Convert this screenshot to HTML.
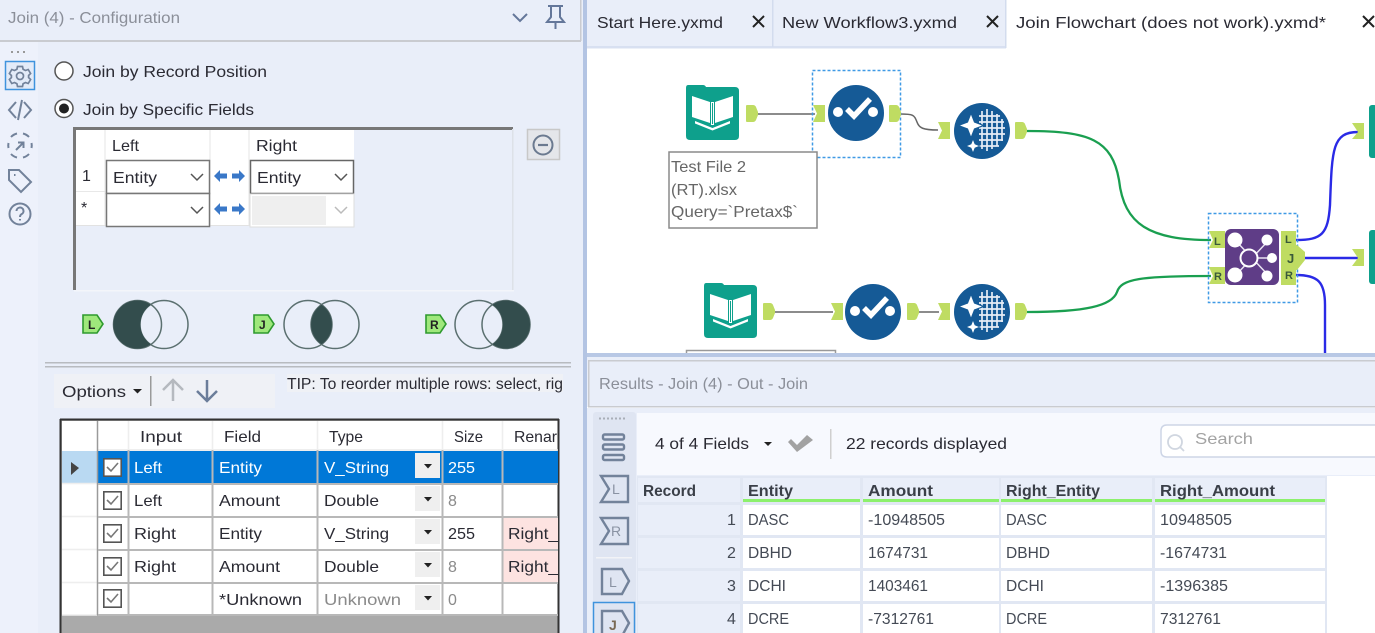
<!DOCTYPE html>
<html><head><meta charset="utf-8"><style>
html,body{margin:0;padding:0;background:#fff;overflow:hidden}
svg{display:block;position:absolute;left:0;top:0}
text{font-family:"Liberation Sans",sans-serif;font-size:16px;fill:#2a2a33}
.ttl{fill:#8b8f99}
.res{fill:#444a55}
.hdr{font-weight:bold;fill:#3a3f48}
.ic{fill:none;stroke:#72829a;stroke-width:2}
.gl{stroke:#b8b8b8;stroke-width:2}
</style></head><body>
<svg width="1375" height="633" viewBox="0 0 1375 633" xmlns="http://www.w3.org/2000/svg">
<defs>
<g id="book"><path d="M3 0h15q2 0 3 2h29q4 0 4 4v45q0 4-4 4H5q-4 0-4-4V3q0-3 2-3z" fill="#0ea08c"/>
<path d="M7 11l18 6v21L7 32zM48 11L30 17v21l18-6z" fill="#fff"/><path d="M26 17h3v23h-3z" fill="#fff"/><path d="M27.500 18v21" stroke="#0ea08c" stroke-width="1"/><path d="M10 36l17.500 7L45 36v2.500l-17.500 7L10 38.500z" fill="#fff"/></g>
<g id="check"><circle r="28" fill="#155a96"/><circle cx="-18" cy="-1" r="5" fill="#fff"/><circle cx="17" cy="-1" r="5" fill="#fff"/><path d="M-9-4l7 7L14-14" fill="none" stroke="#fff" stroke-width="5.500"/></g>
<g id="star"><circle r="28" fill="#155a96"/>
<path d="M0-20v38M5-22v42M10-20v38M15-17v32M20-12v22M-3-15H18M-3-9H22M-3-3H23M-3 3H23M-3 9H21M-3 15H17" stroke="#e6edf6" stroke-width="1.700"/>
<path d="M-11-18l3.500 9 9 3.500-9 3.500-3.500 9-3.500-9-9-3.500 9-3.500z" fill="#fff" stroke="#155a96" stroke-width="1.200"/><path d="M-9 8l2 5 5 2-5 2-2 5-2-5-5-2 5-2z" fill="#fff" stroke="#155a96" stroke-width=".8"/></g>
<polygon id="pIn" points="0,0 12,0 12,17 0,17 4,8.500" fill="#bfdc62"/>
<path id="pOut" d="M1 0h6q2 0 3 2l2 5v3l-2 5q-1 2-3 2H1q-1 0-1-1V1q0-1 1-1z" fill="#bfdc62"/>
<g id="ar"><path d="M0 6l6-6v3.500h7v5H6V12z" fill="#3a78c8"/><path d="M31 6l-6-6v3.500h-7v5h7V12z" fill="#3a78c8"/></g>
<g id="cb"><rect x=".8" y=".8" width="17.400" height="17.400" fill="#fff" stroke="#555" stroke-width="1.600"/><path d="M4 9l4 4 7-8" fill="none" stroke="#777" stroke-width="1.600"/></g>
<g id="dd"><rect width="25" height="25" fill="#efefef"/><path d="M9 11h8l-4 4.500z" fill="#222"/></g>
</defs>

<!-- left panel -->
<rect width="587" height="633" fill="#e9eef9"/>
<rect x="0" y="42" width="38" height="591" fill="#edf1fb"/>
<rect x="0" y="40" width="581" height="2" fill="#c9cbd0"/>
<rect x="580" y="0" width="1.500" height="41" fill="#c9cbd0"/>
<rect x="583" y="0" width="4" height="633" fill="#b3c4e3"/>
<text x="8" y="23" class="ttl" textLength="172" lengthAdjust="spacingAndGlyphs">Join (4) - Configuration</text>
<path d="M513 14l7 7 7-7" fill="none" stroke="#64779a" stroke-width="2"/>
<path d="M548 6h15M551 6v11l-4 5h17l-4-5V6M555.500 22v7" fill="none" stroke="#64779a" stroke-width="2"/>

<!-- side icons -->
<g fill="#999"><rect x="11" y="51" width="2" height="2"/><rect x="17" y="51" width="2" height="2"/><rect x="23" y="51" width="2" height="2"/></g>
<rect x="5.500" y="61.500" width="29" height="28" fill="#e3ebf8" stroke="#3f93dd" stroke-width="1.500"/>
<circle cx="20" cy="76" r="3.500" class="ic" style="stroke-width:1.700"/>
<path class="ic" style="stroke-width:1.700" d="M17.500 66.500h5l.6 2.800 2.400 1.200 2.700-1 2.400 4-2 2 0 2 2 2-2.400 4-2.700-1-2.400 1.200-.6 2.800h-5l-.6-2.800-2.400-1.200-2.700 1-2.400-4 2-2 0-2-2-2 2.400-4 2.700 1 2.400-1.200z"/>
<path class="ic" d="M16 102l-7 8 7 8M24 102l7 8-7 8M22 100l-4 20"/>
<path class="ic" d="M11 137a12 12 0 0 1 6-3.500M23 133.500a12 12 0 0 1 6 3.500M31.500 143a12 12 0 0 1 0 5M29 154a12 12 0 0 1-6 3.500M17 157.500a12 12 0 0 1-6-3.500M8.500 148a12 12 0 0 1 0-5M16 150l7-7M18 142.500h5.500v5.500"/>
<path class="ic" d="M9 170h10l12 12-10 10L9 180zM14 175h1.500"/>
<circle cx="20" cy="214" r="10.500" class="ic"/><path class="ic" d="M16.500 211a3.500 3.500 0 1 1 5 3.200c-1 .6-1.500 1.300-1.500 2.800M20 219v1.500"/>

<!-- radios -->
<circle cx="64" cy="71" r="9" fill="#fff" stroke="#555" stroke-width="1.500"/>
<circle cx="64" cy="108.500" r="9" fill="#fff" stroke="#555" stroke-width="1.500"/><circle cx="64" cy="108.500" r="5" fill="#222"/>
<text x="83" y="77" textLength="184" lengthAdjust="spacingAndGlyphs">Join by Record Position</text>
<text x="83" y="115" textLength="171" lengthAdjust="spacingAndGlyphs">Join by Specific Fields</text>

<!-- join field grid -->
<rect x="74" y="129" width="439" height="162" fill="#e9eef9"/>
<rect x="73" y="127" width="440" height="3" fill="#777"/>
<rect x="73" y="127" width="3" height="163" fill="#777"/>
<rect x="512" y="129" width="1.500" height="162" fill="#dde1e8"/>
<rect x="74" y="290" width="440" height="1.500" fill="#f3f5fa"/>
<rect x="76" y="130" width="278" height="96" fill="#fff"/>
<rect x="76" y="191" width="30" height="1" fill="#e8e8e8"/><rect x="76" y="225" width="278" height="1" fill="#e2e2e2"/>
<path d="M105 130v96M210 130v96M249 130v96" stroke="#e4e4e4" stroke-width="1"/>
<text x="112" y="151" textLength="27" lengthAdjust="spacingAndGlyphs">Left</text>
<text x="256" y="151" textLength="41" lengthAdjust="spacingAndGlyphs">Right</text>
<text x="82" y="181">1</text><text x="81" y="213">*</text>
<rect x="106.500" y="160.500" width="103" height="33" fill="#fff" stroke="#777" stroke-width="1.500"/>
<rect x="106.500" y="193.500" width="103" height="33" fill="#fff" stroke="#777" stroke-width="1.500"/>
<rect x="250.500" y="160.500" width="103" height="33" fill="#fff" stroke="#666" stroke-width="1.500"/>
<rect x="250" y="194" width="104" height="33" fill="#fff" stroke="#ddd"/><rect x="252" y="196" width="74" height="29" fill="#efefef"/>
<text x="113" y="183" textLength="44" lengthAdjust="spacingAndGlyphs">Entity</text>
<text x="257" y="183" textLength="44" lengthAdjust="spacingAndGlyphs">Entity</text>
<path d="M191 174l6 6 6-6M191 207l6 6 6-6M335 174l6 6 6-6" fill="none" stroke="#555" stroke-width="1.500"/>
<path d="M335 207l6 6 6-6" fill="none" stroke="#bbb" stroke-width="1.500"/>
<use href="#ar" x="214" y="170"/><use href="#ar" x="214" y="203"/>
<rect x="527.500" y="129.500" width="32" height="30" fill="#e4e6ea" stroke="#c8c8c8" stroke-width="1.500"/>
<circle cx="543" cy="145" r="9.500" fill="none" stroke="#6b7a90" stroke-width="2"/><path d="M538 145h10" stroke="#6b7a90" stroke-width="2.200"/>

<!-- venn -->
<g transform="translate(83,315)"><path d="M0 0h14l6 9-6 9H0z" fill="#9fe87c" stroke="#2f9a2f" stroke-width="1.600"/><text x="5" y="14" style="font-size:12px;font-weight:bold;fill:#222">L</text></g>
<g transform="translate(254,315)"><path d="M0 0h14l6 9-6 9H0z" fill="#9fe87c" stroke="#2f9a2f" stroke-width="1.600"/><text x="5" y="14" style="font-size:12px;font-weight:bold;fill:#222">J</text></g>
<g transform="translate(426,315)"><path d="M0 0h14l6 9-6 9H0z" fill="#9fe87c" stroke="#2f9a2f" stroke-width="1.600"/><text x="4" y="14" style="font-size:12px;font-weight:bold;fill:#222">R</text></g>
<g fill="none" stroke="#5b7070" stroke-width="1.500">
<circle cx="137.500" cy="324.500" r="24"/><circle cx="164" cy="324.500" r="24"/>
<circle cx="308" cy="324.500" r="24"/><circle cx="335" cy="324.500" r="24"/>
<circle cx="479" cy="324.500" r="24"/><circle cx="506" cy="324.500" r="24"/></g>
<path d="M150.800 304.700A24 24 0 1 0 150.800 344.300A24 24 0 0 1 150.800 304.700z" fill="#334d4d"/>
<path d="M321.500 304.700A24 24 0 0 1 321.500 344.300A24 24 0 0 1 321.500 304.700z" fill="#334d4d"/>
<path d="M492.500 304.700A24 24 0 1 1 492.500 344.300A24 24 0 0 0 492.500 304.700z" fill="#334d4d"/>

<!-- divider -->
<rect x="45" y="362" width="526" height="1.500" fill="#b8bbc0"/><rect x="45" y="366" width="526" height="1.500" fill="#b8bbc0"/>
<rect x="54" y="374" width="221" height="34" fill="#eff1f6"/>
<rect x="287" y="374" width="276" height="18" fill="#eff1f6"/>
<text x="62" y="397" textLength="64" lengthAdjust="spacingAndGlyphs">Options</text>
<path d="M133 389h9l-4.500 4.500z" fill="#222"/>
<rect x="150" y="376" width="1.500" height="30" fill="#9a9a9a"/>
<path d="M173 380v21M163 390l10-10 10 10" fill="none" stroke="#b5b9bf" stroke-width="2.500"/>
<path d="M207 380v21M197 391l10 10 10-10" fill="none" stroke="#6b7d9a" stroke-width="2.500"/>
<text x="287" y="389" textLength="276" lengthAdjust="spacingAndGlyphs">TIP: To reorder multiple rows: select, rig</text>

<!-- field table -->
<rect x="60" y="419" width="499" height="214" fill="#aaaaaa"/>
<rect x="62" y="421" width="496" height="194" fill="#fff"/>
<rect x="60" y="418.500" width="499" height="2" fill="#333"/>
<rect x="59.500" y="419" width="2" height="214" fill="#333"/><rect x="557.500" y="419" width="2" height="214" fill="#333"/>
<rect x="62" y="451" width="35" height="32" fill="#b9d9f2"/>
<rect x="98" y="451" width="460" height="32" fill="#0078d7"/>
<rect x="503" y="517" width="55" height="65" fill="#fde3e1"/>
<path d="M62 483.500h35M62 516.500h35M62 549.500h35M62 582.500h35M62 615h35" stroke="#eeeeee" stroke-width="1.500"/>
<path d="M98 450H558" stroke="#e8e8e8" stroke-width="1.500"/>
<path d="M97.500 421V615" stroke="#9a9a9a" stroke-width="1.500"/>
<path d="M128.500 450V615M212.500 450V615M317.500 450V615M442.500 450V615M502.500 450V615" class="gl"/>
<path d="M128.500 421V450M212.500 421V450M317.500 421V450M442.500 421V450M502.500 421V450" stroke="#eeeeee" stroke-width="1.500"/>
<path d="M98 484H558M98 517H558M98 550H558M98 583H558M98 615H558" class="gl"/>
<path d="M71 462l8 6-8 7z" fill="#444"/>
<use href="#cb" x="103" y="458"/><use href="#cb" x="103" y="491"/><use href="#cb" x="103" y="524"/><use href="#cb" x="103" y="557"/><use href="#cb" x="103" y="589"/>
<text x="140" y="442" textLength="42" lengthAdjust="spacingAndGlyphs">Input</text>
<text x="224" y="442" textLength="37" lengthAdjust="spacingAndGlyphs">Field</text>
<text x="329" y="442" textLength="34" lengthAdjust="spacingAndGlyphs">Type</text>
<text x="454" y="442" textLength="29" lengthAdjust="spacingAndGlyphs">Size</text>
<text x="514" y="442" textLength="43" lengthAdjust="spacingAndGlyphs">Renar</text>
<g>
<text x="134" y="473" style="fill:#fff" textLength="28" lengthAdjust="spacingAndGlyphs">Left</text>
<text x="219" y="473" style="fill:#fff" textLength="43" lengthAdjust="spacingAndGlyphs">Entity</text>
<text x="324" y="473" style="fill:#fff" textLength="65" lengthAdjust="spacingAndGlyphs">V_String</text>
<text x="448" y="473" style="fill:#fff" textLength="27" lengthAdjust="spacingAndGlyphs">255</text>
<text x="134" y="506" textLength="28" lengthAdjust="spacingAndGlyphs">Left</text>
<text x="219" y="506" textLength="61" lengthAdjust="spacingAndGlyphs">Amount</text>
<text x="324" y="506" textLength="55" lengthAdjust="spacingAndGlyphs">Double</text>
<text x="448" y="506" style="fill:#8a8a8a">8</text>
<text x="134" y="539" textLength="42" lengthAdjust="spacingAndGlyphs">Right</text>
<text x="219" y="539" textLength="43" lengthAdjust="spacingAndGlyphs">Entity</text>
<text x="324" y="539" textLength="65" lengthAdjust="spacingAndGlyphs">V_String</text>
<text x="448" y="539" textLength="27" lengthAdjust="spacingAndGlyphs">255</text>
<text x="508" y="539" textLength="50" lengthAdjust="spacingAndGlyphs">Right_</text>
<text x="134" y="572" textLength="42" lengthAdjust="spacingAndGlyphs">Right</text>
<text x="219" y="572" textLength="61" lengthAdjust="spacingAndGlyphs">Amount</text>
<text x="324" y="572" textLength="55" lengthAdjust="spacingAndGlyphs">Double</text>
<text x="448" y="572" style="fill:#8a8a8a">8</text>
<text x="508" y="572" textLength="50" lengthAdjust="spacingAndGlyphs">Right_</text>
<text x="219" y="605" textLength="83" lengthAdjust="spacingAndGlyphs">*Unknown</text>
<text x="324" y="605" style="fill:#8a8a8a" textLength="77" lengthAdjust="spacingAndGlyphs">Unknown</text>
<text x="448" y="605" style="fill:#8a8a8a">0</text>
</g>
<use href="#dd" x="415" y="453"/><use href="#dd" x="415" y="486"/><use href="#dd" x="415" y="519"/><use href="#dd" x="415" y="552"/><use href="#dd" x="415" y="585"/>

<!-- tabs -->
<rect x="587" y="0" width="419" height="46" fill="#e9eef9"/>
<rect x="587" y="46" width="419" height="2.500" fill="#d8e0f1"/>
<rect x="772" y="0" width="1.500" height="47" fill="#d3dcee"/>
<rect x="1005" y="0" width="1.500" height="48" fill="#d3dcee"/>
<text x="597" y="28" textLength="126" lengthAdjust="spacingAndGlyphs">Start Here.yxmd</text>
<text x="782" y="28" textLength="175" lengthAdjust="spacingAndGlyphs">New Workflow3.yxmd</text>
<text x="1016" y="28" textLength="310" lengthAdjust="spacingAndGlyphs">Join Flowchart (does not work).yxmd*</text>
<path d="M753 16l11 11M764 16l-11 11M987 16l11 11M998 16l-11 11M1363 16l11 11M1374 16l-11 11" fill="none" stroke="#222" stroke-width="2"/>

<!-- canvas -->
<path d="M757 114H815" stroke="#666" stroke-width="1.500"/>
<path d="M900 114c14 0 14 1 17 8 2 6 6 8 21 8" fill="none" stroke="#666" stroke-width="1.500"/>
<path d="M775 312H833M918 312H939" stroke="#666" stroke-width="1.500"/>
<path d="M1027 131C1090 131 1112 140 1119 180C1124 225 1150 240 1211 240" fill="none" stroke="#1a9f50" stroke-width="2.300"/>
<path d="M1027 312C1085 312 1112 306 1117 292C1121 279 1140 276 1211 276" fill="none" stroke="#1a9f50" stroke-width="2.300"/>
<path d="M1296 240C1322 240 1328 234 1330 205C1332 150 1332 132 1358 132" fill="none" stroke="#2a2ae6" stroke-width="2.400"/>
<path d="M1305 258H1358" stroke="#2a2ae6" stroke-width="2.400"/>
<path d="M1296 275C1318 275 1325 282 1325 305V353" fill="none" stroke="#2a2ae6" stroke-width="2.400"/>

<use href="#book" x="685" y="85"/>
<use href="#pOut" x="746" y="105"/>
<rect x="812.500" y="70.500" width="88" height="87" fill="none" stroke="#3f9ae5" stroke-width="1.500" stroke-dasharray="3 2"/>
<use href="#pIn" x="813" y="105"/>
<use href="#check" x="856" y="113"/>
<use href="#pOut" x="889" y="105"/>
<use href="#pIn" x="938" y="122"/>
<use href="#star" x="982" y="131"/>
<use href="#pOut" x="1015" y="122"/>
<rect x="669" y="152" width="148" height="76" fill="#fff" stroke="#8a8a8a" stroke-width="1.500"/>
<g>
<text x="671" y="172" style="fill:#666" textLength="75" lengthAdjust="spacingAndGlyphs">Test File 2</text>
<text x="671" y="195" style="fill:#666" textLength="66" lengthAdjust="spacingAndGlyphs">(RT).xlsx</text>
<text x="671" y="217" style="fill:#666" textLength="127" lengthAdjust="spacingAndGlyphs">Query=`Pretax$`</text>
</g>
<use href="#book" x="703" y="283"/>
<use href="#pOut" x="763" y="303"/>
<use href="#pIn" x="831" y="303"/>
<use href="#check" x="873" y="312"/>
<use href="#pOut" x="907" y="303"/>
<use href="#pIn" x="938" y="303"/>
<use href="#star" x="982" y="312"/>
<use href="#pOut" x="1015" y="303"/>
<rect x="686.500" y="350.500" width="149" height="6" fill="#fff" stroke="#999" stroke-width="1.500"/>

<!-- join tool -->
<rect x="1208.500" y="213.500" width="89" height="89" fill="none" stroke="#3f9ae5" stroke-width="1.500" stroke-dasharray="3 2"/>
<polygon points="1209,231 1225,231 1225,248 1209,248 1213,240" fill="#bfdc62"/>
<polygon points="1209,267 1225,267 1225,284 1209,284 1213,276" fill="#bfdc62"/>
<text x="1214" y="245" style="font-size:11px;font-weight:bold;fill:#3a5a3a">L</text>
<text x="1214" y="280" style="font-size:11px;font-weight:bold;fill:#3a5a3a">R</text>
<rect x="1225" y="229" width="54" height="56" rx="6" fill="#5f3d87"/>
<g stroke="#e8e2f0" stroke-width="1.500" fill="#fff"><path d="M1235 240L1269 276M1235 276L1269 240M1250 258H1272"/><circle cx="1235" cy="240" r="7.500" stroke="none"/><circle cx="1235" cy="275" r="7.500" stroke="none"/><circle cx="1267" cy="240" r="5.500" stroke="none"/><circle cx="1272" cy="258" r="5" stroke="none"/><circle cx="1267" cy="276" r="5.500" stroke="none"/></g>
<circle cx="1249" cy="258" r="8.500" fill="#5f3d87" stroke="#fff" stroke-width="2"/>
<rect x="1281" y="231" width="15" height="14" fill="#bfdc62"/>
<path d="M1281 245h16l8 7v8l-8 10h-16z" fill="#bfdc62"/>
<rect x="1281" y="270" width="15" height="15" fill="#bfdc62"/>
<text x="1285" y="243" style="font-size:11px;font-weight:bold;fill:#3a5a3a">L</text>
<text x="1287" y="263" style="font-size:13px;font-weight:bold;fill:#3a5a3a">J</text>
<text x="1285" y="279" style="font-size:11px;font-weight:bold;fill:#3a5a3a">R</text>
<polygon points="1352,123 1364,123 1364,139 1352,139 1358,132" fill="#bfdc62"/>
<polygon points="1352,249 1364,249 1364,266 1352,266 1358,258" fill="#bfdc62"/>
<rect x="1369" y="105" width="8" height="53" rx="3" fill="#0ea08c"/>
<rect x="1369" y="230" width="8" height="54" rx="3" fill="#0ea08c"/>

<!-- horizontal splitter -->
<rect x="587" y="353" width="788" height="4" fill="#b8c8e5"/>
<rect x="587" y="357" width="788" height="50" fill="#e9eef9"/>
<rect x="588" y="360" width="787" height="1.500" fill="#c9cbd0"/>
<rect x="588" y="406" width="787" height="1.500" fill="#c9cbd0"/>
<rect x="588" y="360" width="1.500" height="47" fill="#c9cbd0"/>
<text x="599" y="389" class="ttl" textLength="209" lengthAdjust="spacingAndGlyphs">Results - Join (4) - Out - Join</text>

<!-- results sidebar -->
<rect x="587" y="408" width="788" height="225" fill="#e9eef9"/>
<rect x="593" y="412" width="43" height="221" rx="3" fill="#dfe5f2"/>
<path d="M599 418.500h28" stroke="#a9aeb8" stroke-width="2" stroke-dasharray="2 2"/>
<g class="ic" style="stroke-width:2.400"><rect x="603" y="434.500" width="21" height="5" rx="1.500"/><rect x="603" y="444.500" width="21" height="5" rx="1.500"/><rect x="603" y="455" width="21" height="5" rx="1.500"/>
<path d="M601 476h27v26h-27l8-13z"/><path d="M601 518h27v26h-27l8-13z"/>
<path d="M602 569h20l7 12-7 13h-20z"/><path d="M602 611h20l7 12-7 13h-20z"/></g>
<text x="612" y="494" style="font-size:14px;fill:#8a93a3">L</text><text x="611" y="536" style="font-size:14px;fill:#8a93a3">R</text>
<text x="609" y="587" style="font-size:14px;fill:#8a93a3">L</text><text x="609" y="630" style="font-size:14px;font-weight:bold;fill:#7a6a55">J</text>
<rect x="596" y="557" width="36" height="1.500" fill="#f2f3f7"/>
<rect x="593.500" y="602.500" width="41" height="40" fill="none" stroke="#3f93dd" stroke-width="1.500"/>

<!-- results toolbar -->
<rect x="637" y="413" width="738" height="62" fill="#f7f9fe"/>
<text x="655" y="449" textLength="94" lengthAdjust="spacingAndGlyphs">4 of 4 Fields</text>
<path d="M764 442h8l-4 4z" fill="#222"/>
<path d="M788 442l3-3 6 6 10-10 6 5-16 12z" fill="#a2a2a2"/>
<rect x="830" y="429" width="1.500" height="30" fill="#cfcfcf"/>
<text x="846" y="449" textLength="161" lengthAdjust="spacingAndGlyphs">22 records displayed</text>
<path d="M1375 425h-208q-6 0-6 6v20q0 6 6 6h208" fill="#fff" stroke="#cdd5e6" stroke-width="1.500"/>
<circle cx="1175" cy="442" r="7" fill="none" stroke="#d0d6e0" stroke-width="1.800"/><path d="M1180 447l4 4" stroke="#d0d6e0" stroke-width="1.800"/>
<text x="1195" y="444" style="fill:#a3a3a3" textLength="58" lengthAdjust="spacingAndGlyphs">Search</text>

<!-- results table -->
<rect x="637" y="476" width="690" height="157" fill="#e1e7f3"/>
<rect x="1327" y="476" width="48" height="157" fill="#fff"/>
<g fill="#e9eef9"><rect x="638" y="478" width="102" height="24"/><rect x="743" y="478" width="117" height="24"/><rect x="863" y="478" width="136" height="24"/><rect x="1001" y="478" width="151" height="24"/><rect x="1155" y="478" width="170" height="24"/>
<rect x="638" y="505" width="102" height="30"/><rect x="638" y="538" width="102" height="30"/><rect x="638" y="571" width="102" height="30"/><rect x="638" y="604" width="102" height="29"/></g>
<g fill="#8cf06c"><rect x="743" y="499" width="117" height="3"/><rect x="863" y="499" width="136" height="3"/><rect x="1001" y="499" width="151" height="3"/><rect x="1155" y="499" width="170" height="3"/></g>
<g fill="#fff">
<rect x="743" y="505" width="117" height="30"/><rect x="863" y="505" width="136" height="30"/><rect x="1001" y="505" width="151" height="30"/><rect x="1155" y="505" width="170" height="30"/>
<rect x="743" y="538" width="117" height="30"/><rect x="863" y="538" width="136" height="30"/><rect x="1001" y="538" width="151" height="30"/><rect x="1155" y="538" width="170" height="30"/>
<rect x="743" y="571" width="117" height="30"/><rect x="863" y="571" width="136" height="30"/><rect x="1001" y="571" width="151" height="30"/><rect x="1155" y="571" width="170" height="30"/>
<rect x="743" y="604" width="117" height="29"/><rect x="863" y="604" width="136" height="29"/><rect x="1001" y="604" width="151" height="29"/><rect x="1155" y="604" width="170" height="29"/>
</g>
<text x="643" y="496" class="hdr" textLength="53" lengthAdjust="spacingAndGlyphs">Record</text>
<text x="748" y="496" class="hdr" textLength="45" lengthAdjust="spacingAndGlyphs">Entity</text>
<text x="868" y="496" class="hdr" textLength="65" lengthAdjust="spacingAndGlyphs">Amount</text>
<text x="1006" y="496" class="hdr" textLength="94" lengthAdjust="spacingAndGlyphs">Right_Entity</text>
<text x="1160" y="496" class="hdr" textLength="115" lengthAdjust="spacingAndGlyphs">Right_Amount</text>
<g class="res">
<text x="727" y="525" class="res">1</text><text x="727" y="558" class="res">2</text><text x="727" y="591" class="res">3</text><text x="727" y="624" class="res">4</text>
<text x="748" y="525" class="res" textLength="41" lengthAdjust="spacingAndGlyphs">DASC</text>
<text x="748" y="558" class="res" textLength="44" lengthAdjust="spacingAndGlyphs">DBHD</text>
<text x="748" y="591" class="res" textLength="38" lengthAdjust="spacingAndGlyphs">DCHI</text>
<text x="748" y="624" class="res" textLength="41" lengthAdjust="spacingAndGlyphs">DCRE</text>
<text x="868" y="525" class="res" textLength="77" lengthAdjust="spacingAndGlyphs">-10948505</text>
<text x="868" y="558" class="res" textLength="60" lengthAdjust="spacingAndGlyphs">1674731</text>
<text x="868" y="591" class="res" textLength="60" lengthAdjust="spacingAndGlyphs">1403461</text>
<text x="868" y="624" class="res" textLength="66" lengthAdjust="spacingAndGlyphs">-7312761</text>
<text x="1006" y="525" class="res" textLength="41" lengthAdjust="spacingAndGlyphs">DASC</text>
<text x="1006" y="558" class="res" textLength="44" lengthAdjust="spacingAndGlyphs">DBHD</text>
<text x="1006" y="591" class="res" textLength="38" lengthAdjust="spacingAndGlyphs">DCHI</text>
<text x="1006" y="624" class="res" textLength="41" lengthAdjust="spacingAndGlyphs">DCRE</text>
<text x="1160" y="525" class="res" textLength="72" lengthAdjust="spacingAndGlyphs">10948505</text>
<text x="1160" y="558" class="res" textLength="67" lengthAdjust="spacingAndGlyphs">-1674731</text>
<text x="1160" y="591" class="res" textLength="68" lengthAdjust="spacingAndGlyphs">-1396385</text>
<text x="1160" y="624" class="res" textLength="61" lengthAdjust="spacingAndGlyphs">7312761</text>
</g>
</svg>
</body></html>
